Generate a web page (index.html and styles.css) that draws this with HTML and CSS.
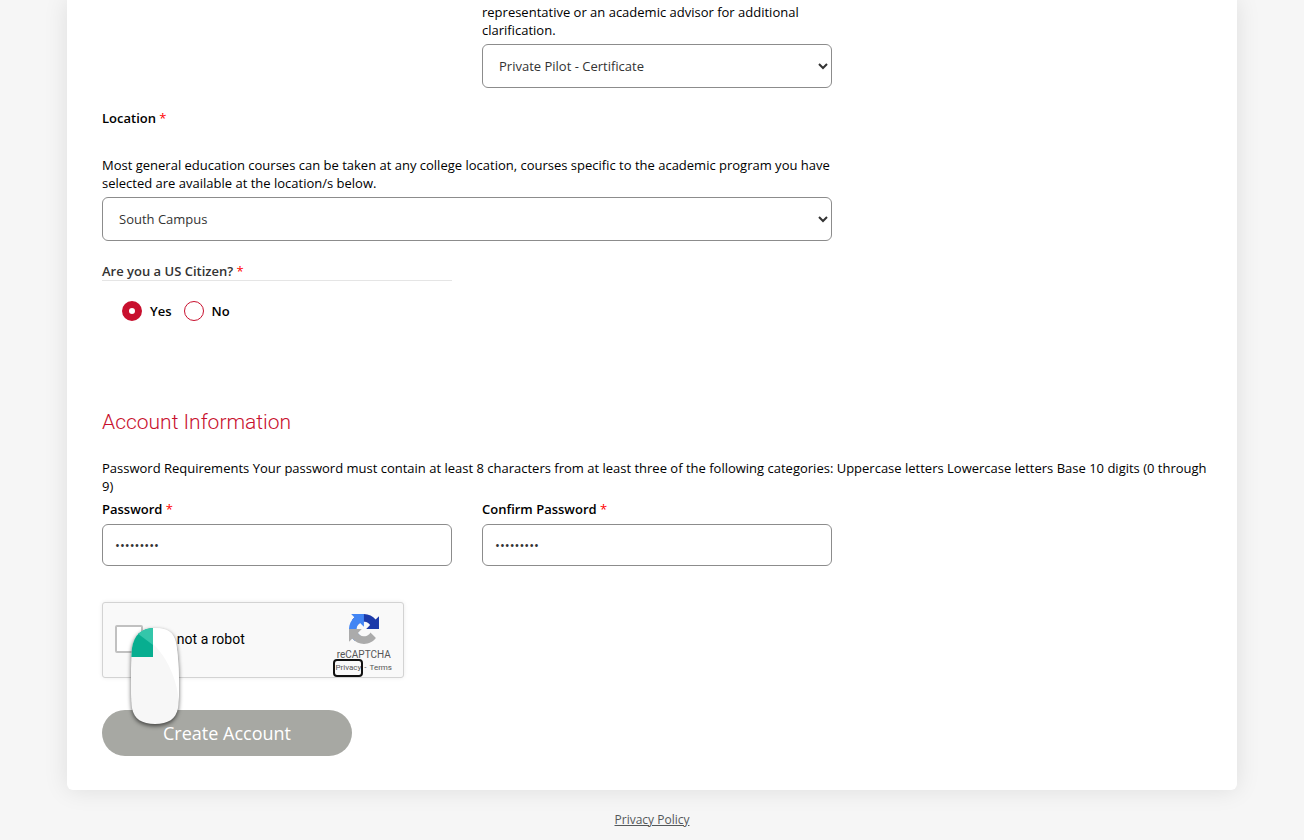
FILE: index.html
```
<!DOCTYPE html>
<html lang="en">
<head>
    <meta charset="UTF-8">
    <meta name="viewport" content="width=device-width, initial-scale=1.0">
    <title>Create Account</title>
    <link rel="stylesheet" href="styles.css">
</head>
<body>
    <main class="card">
        <form>
            <div class="row">
                <div class="field second">
                    <p>representative or an academic advisor for additional clarification.</p>
                    <select aria-label="Program">
                        <option>Private Pilot - Certificate</option>
                    </select>
                </div>
            </div>

            <div class="row">
                <div class="field wide location">
                    <label for="location">Location <span class="required">*</span></label>
                    <p>Most general education courses can be taken at any college location, courses specific to the academic program you have selected are available at the location/s below.</p>
                    <select id="location">
                        <option>South Campus</option>
                    </select>
                </div>
            </div>

            <div class="row">
                <fieldset class="field citizen">
                    <legend>Are you a US Citizen? <span class="required">*</span></legend>
                    <div class="radios">
                        <label><input type="radio" name="citizen" checked> Yes</label>
                        <label><input type="radio" name="citizen"> No</label>
                    </div>
                </fieldset>
            </div>

            <h2>Account Information</h2>
            <p>Password Requirements Your password must contain at least 8 characters from at least three of the following categories: Uppercase letters Lowercase letters Base 10 digits (0 through 9)</p>

            <div class="row passwords">
                <div class="field">
                    <label for="password">Password <span class="required">*</span></label>
                    <input type="password" id="password" value="Passw0rd1">
                </div>
                <div class="field">
                    <label for="confirm">Confirm Password <span class="required">*</span></label>
                    <input type="password" id="confirm" value="Passw0rd1">
                </div>
            </div>

            <div class="captcha">
                <input type="checkbox" id="robot">
                <label for="robot">I'm not a robot</label>
                <div class="captcha-brand">
                    <svg width="30" height="30" viewBox="0 0 64 64" aria-hidden="true">
                        <path fill="#1c3aa9" d="M64 31.955l-.033-1.37V4.687l-7.16 7.16C50.948 4.674 42.033.093 32.05.093c-10.4 0-19.622 4.96-25.458 12.64l11.736 11.86a15.55 15.55 0 0 1 4.754-5.334c2.05-1.6 4.952-2.906 8.968-2.906.485 0 .86.057 1.135.163 4.976.393 9.288 3.14 11.828 7.124l-8.307 8.307L64 31.953"/>
                        <path fill="#4285f4" d="M31.862.094l-1.37.033H4.594l7.16 7.16C4.58 13.147 0 22.06 0 32.046c0 10.4 4.96 19.622 12.64 25.458L24.5 45.768a15.55 15.55 0 0 1-5.334-4.754c-1.6-2.05-2.906-4.952-2.906-8.968 0-.485.057-.86.163-1.135.393-4.976 3.14-9.288 7.124-11.828l8.307 8.307L31.86.095"/>
                        <path fill="#ababab" d="M.001 32.045l.033 1.37v25.898l7.16-7.16c5.86 7.173 14.774 11.754 24.76 11.754 10.4 0 19.622-4.96 25.458-12.64l-11.736-11.86a15.55 15.55 0 0 1-4.754 5.334c-2.05 1.6-4.952 2.906-8.968 2.906-.485 0-.86-.057-1.135-.163-4.976-.393-9.288-3.14-11.828-7.124l8.307-8.307c-10.522.04-22.4.066-27.295-.005"/>
                    </svg>
                    <span class="captcha-name">reCAPTCHA</span>
                    <div class="captcha-links">
                        <a href="#" class="focused">Privacy</a>
                        <span>-</span>
                        <a href="#">Terms</a>
                    </div>
                </div>

                <!-- Mouse pointer hint -->
                <svg class="mouse" width="48" height="96" viewBox="0 0 48 96" aria-hidden="true">
                    <defs>
                        <clipPath id="body">
                            <path d="M24 0C37 0 43 5 45 15C48 30 49 66 47 80C45 91 37 96 24 96C11 96 3 91 1 80C-1 66 0 30 1 20C3 7 10 0 24 0Z"/>
                        </clipPath>
                    </defs>
                    <g clip-path="url(#body)">
                        <rect width="48" height="96" fill="#f7f7f7"/>
                        <path d="M22 0H48V74C46 51 36 29 22 16Z" fill="#fff"/>
                        <path d="M0 0H22V29H0Z" fill="#08ae90"/>
                        <path d="M6 0H22V17L6 5Z" fill="#34c6aa"/>
                    </g>
                </svg>
            </div>

            <button type="submit">Create Account</button>
        </form>
    </main>

    <footer>
        <a href="#">Privacy Policy</a>
    </footer>
</body>
</html>
```
FILE: styles.css
```
/* Base */
* {
    margin: 0;
    padding: 0;
    box-sizing: border-box;
}

body {
    background: #f6f6f6;
    color: #000;
    font-family: 'Open Sans', sans-serif;
    font-size: 13px;
    line-height: 18px;
}

.card {
    max-width: 1170px;
    margin: 0 auto;
    padding: 3px 25px 34px 35px;
    background: #fff;
    border-radius: 0 0 6px 6px;
    box-shadow: 0 0 25px rgba(0, 0, 0, 0.1);
}

/* Form grid */
.row {
    display: grid;
    grid-template-columns: repeat(3, 1fr);
    gap: 30px;
    margin-bottom: 21px;
}

.field {
    display: flex;
    flex-direction: column;
    min-width: 0;
}

.second {
    grid-column: 2;
}

.wide {
    grid-column: span 2;
}

.field label {
    font-weight: 600;
}

.required {
    color: #f00;
    font-weight: 400;
}

select,
input[type="password"] {
    width: 100%;
    border: 1px solid #8c8c8c;
    border-radius: 6px;
    background: #fff;
    color: #333;
    font-family: inherit;
    font-size: 13px;
}

select {
    height: 44px;
    margin-top: 5px;
    padding: 0 0 0 12px;
}

input[type="password"] {
    height: 42px;
    margin-top: 6px;
    padding: 0 12px;
}

.location label {
    margin-bottom: 29px;
}

/* Radios */
.citizen {
    border: none;
}

.citizen legend {
    width: 100%;
    border-bottom: 1px solid #e5e5e5;
    color: #333;
    font-weight: 600;
}

.radios {
    display: flex;
    gap: 12px;
    padding: 20px 20px 0;
}

.radios label {
    display: flex;
    align-items: center;
    gap: 8px;
}

.radios input {
    appearance: none;
    width: 20px;
    height: 20px;
    border: 1px solid #c8102e;
    border-radius: 50%;
    background: #fff;
}

.radios input:checked {
    border-width: 7px;
}

/* Account section */
h2 {
    margin: 86px 0 22px;
    color: #c8102e;
    font-family: Roboto, sans-serif;
    font-size: 21px;
    font-weight: 300;
    line-height: 30px;
}

.passwords {
    margin: 5px 0 36px;
}

/* Captcha */
.captcha {
    position: relative;
    display: flex;
    align-items: center;
    width: 302px;
    height: 76px;
    margin-bottom: 32px;
    padding: 0 0 3px 12px;
    border: 1px solid #d3d3d3;
    border-radius: 3px;
    background: #f9f9f9;
    box-shadow: 0 0 4px rgba(0, 0, 0, 0.08);
    font-family: Roboto, sans-serif;
}

.captcha input {
    appearance: none;
    width: 28px;
    height: 28px;
    margin-right: 12px;
    border: 2px solid #c1c1c1;
    border-radius: 2px;
    background: #fff;
}

.captcha label {
    font-size: 14px;
}

.captcha-brand {
    display: flex;
    flex-direction: column;
    align-items: center;
    align-self: flex-start;
    margin-left: auto;
    margin-right: 11px;
    padding-top: 11px;
    color: #555;
}

.captcha-name {
    margin-top: 4px;
    font-size: 10px;
    line-height: 14px;
}

.captcha-links {
    display: flex;
    align-items: center;
    gap: 3px;
    margin-top: -1px;
    font-size: 8px;
    line-height: 14px;
}

.captcha-links a {
    color: #555;
    text-decoration: none;
}

.captcha-links .focused {
    border-radius: 2px;
    background: #f9f9f9;
    outline: 2px solid #101010;
}

.mouse {
    position: absolute;
    top: 25px;
    left: 28px;
    z-index: 1;
    overflow: visible;
    filter: drop-shadow(0 2px 2px rgba(0, 0, 0, 0.6));
}

button {
    width: 250px;
    height: 46px;
    display: block;
    border: none;
    border-radius: 23px;
    background: #a7a8a3;
    color: #fff;
    font-family: inherit;
    font-size: 18px;
    cursor: pointer;
}

/* Footer */
footer {
    padding: 21px 0 10px;
    font-size: 12px;
    text-align: center;
}

footer a {
    color: #54585a;
}
```
